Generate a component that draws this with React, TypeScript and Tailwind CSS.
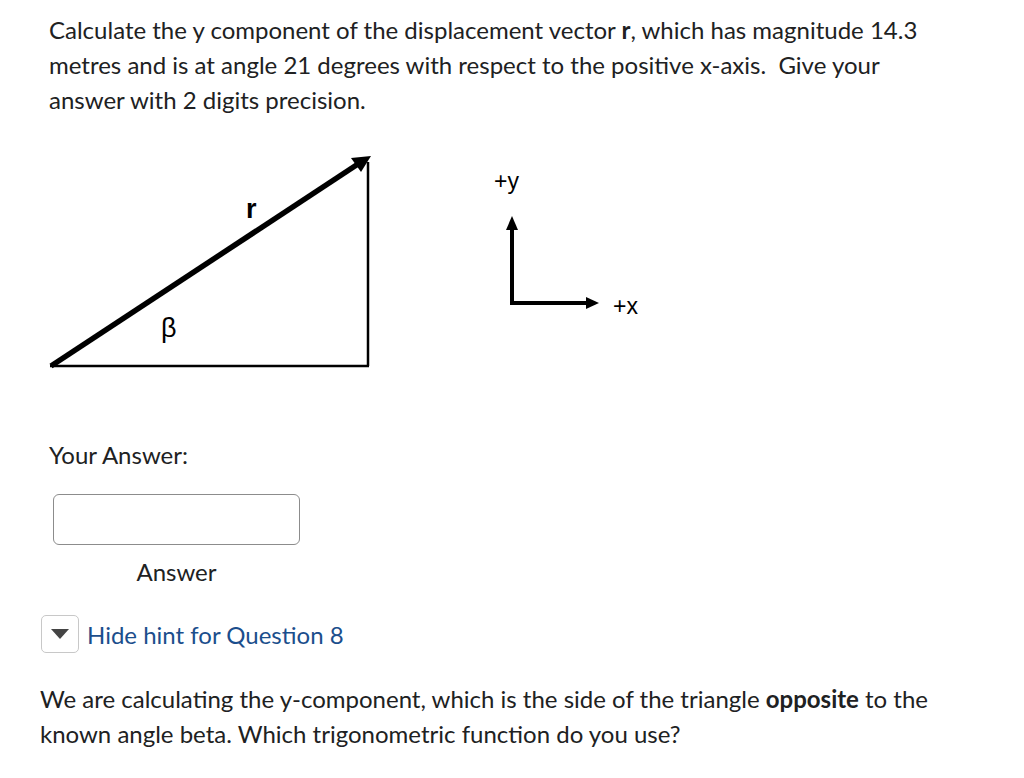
import React from 'react';

function Diagram() {
  return (
    <svg width="620" height="230" viewBox="40 145 620 230" className="block">
      {/* triangle legs */}
      <line x1="50" y1="366" x2="369" y2="366" stroke="#000" strokeWidth="2.5" />
      <line x1="368" y1="366" x2="368" y2="162" stroke="#000" strokeWidth="2.5" />
      {/* vector r */}
      <line x1="51" y1="366" x2="358" y2="164" stroke="#000" strokeWidth="5.5" />
      <polygon points="371,156 351,158 361,172" fill="#000" />
      <text x="246" y="218" fontFamily="Liberation Sans, Arial, sans-serif" fontWeight="700" fontSize="27" fill="#000">r</text>
      <text x="161" y="337" fontFamily="Liberation Sans, Arial, sans-serif" fontSize="27" fill="#000">β</text>
      {/* axes */}
      <line x1="512" y1="303" x2="512" y2="228" stroke="#000" strokeWidth="4" />
      <polygon points="512,216 506,230 518,230" fill="#000" />
      <line x1="510" y1="303" x2="588" y2="303" stroke="#000" strokeWidth="4" />
      <polygon points="599,303 586,297 586,309" fill="#000" />
      <text x="494" y="189" fontFamily="Liberation Sans, Arial, sans-serif" fontSize="23" fill="#000">+y</text>
      <text x="613" y="314" fontFamily="Liberation Sans, Arial, sans-serif" fontSize="23" fill="#000">+x</text>
    </svg>
  );
}

export default function App() {
  return (
    <div className="w-[1024px] min-h-[778px] bg-white text-[#202122] font-['Lato','Noto_Sans',sans-serif] text-[24px]">
      {/* Question */}
      <p className="pl-[49px] pt-[12px] w-[940px] leading-[35px]">
        Calculate the y component of the displacement vector <b>r</b>, which has magnitude 14.3 metres and is at angle 21 degrees with respect to the positive x-axis.&nbsp; Give your answer with 2 digits precision.
      </p>

      <div className="ml-[40px] mt-[28px]">
        <Diagram />
      </div>

      {/* Answer */}
      <div className="pl-[49px] mt-[62px] leading-[35px]">Your Answer:</div>
      <div className="ml-[53px] mt-[22px] w-[247px] h-[51px] rounded-[6px] border border-[#8c8c8c] bg-white" />
      <div className="ml-[53px] mt-[13px] w-[247px] text-center leading-[28px]">Answer</div>

      {/* Hint toggle */}
      <div className="flex items-center gap-[8px] ml-[41px] mt-[29px]">
        <button className="w-[38px] h-[38px] rounded-[5px] border border-[#c8c8c8] bg-white flex items-center justify-center">
          <svg width="18" height="10" viewBox="0 0 18 10">
            <polygon points="0,0 18,0 9,10" fill="#444" />
          </svg>
        </button>
        <span className="text-[#1b4e8c] leading-[35px]">Hide hint for Question 8</span>
      </div>

      {/* Hint */}
      <p className="pl-[40px] mt-[28px] w-[1000px] leading-[35px]">
        We are calculating the y-component, which is the side of the triangle <b>opposite</b> to the known angle beta. Which trigonometric function do you use?
      </p>
    </div>
  );
}
